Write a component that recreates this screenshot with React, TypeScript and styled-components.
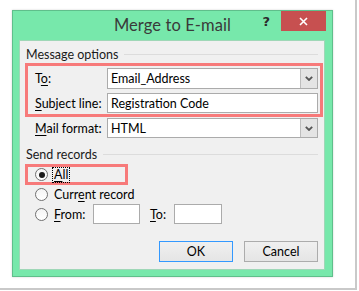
import React from "react";
import styled, { createGlobalStyle } from "styled-components";

const Global = createGlobalStyle`
  html, body { margin: 0; padding: 0; background: #ffffff; }
  body { font-family: Lato, "Noto Sans", sans-serif; }
  * { box-sizing: border-box; }
`;

const Frame = styled.div`
  width: 357px;
  height: 290px;
  border-right: 2px solid #c9c9c9;
  border-bottom: 2px solid #c9c9c9;
  padding: 10px 0 0 12px;
`;

const Dialog = styled.div`
  width: 321px;
  height: 267px;
  background: #77e8ab;
  border: 1px solid #5fbf8b;
  box-shadow: 0 0 2px rgba(0, 0, 0, 0.18);
  padding: 0 6px 0 6px;
  display: flex;
  flex-direction: column;
`;

const TitleBar = styled.div`
  height: 29px;
  display: grid;
  grid-template-columns: 1fr auto 1fr;
  align-items: start;
  margin: 0 -6px;
`;

const Title = styled.div`
  grid-column: 2;
  font-size: 16.5px;
  line-height: 29px;
  color: #3a3a3a;
  letter-spacing: 0.1px;
`;

const Controls = styled.div`
  grid-column: 3;
  justify-self: end;
  display: flex;
  align-items: flex-start;
  gap: 11px;
  margin-right: 6px;
`;

const Help = styled.span`
  font-family: "DejaVu Sans", sans-serif;
  font-weight: bold;
  font-size: 13px;
  line-height: 22px;
  color: #2b2b2b;
`;

const CloseBtn = styled.div`
  width: 45px;
  height: 20px;
  background: #c75050;
  display: flex;
  align-items: center;
  justify-content: center;
`;

const Panel = styled.div`
  width: 306px;
  height: 230px;
  background: #f0f0f0;
  border: 1px solid #9fd7b7;
  padding: 5px 1px 0 5px;
  display: flex;
  flex-direction: column;
  font-size: 12px;
  color: #000;
`;

const GroupHeader = styled.div<{ $top?: number }>`
  display: flex;
  align-items: center;
  height: 16px;
  margin-top: ${(p) => p.$top ?? 0}px;
  padding-left: 1px;
  padding-right: 5px;
  color: #1a1a1a;
  font-size: 12.5px;
`;

const Rule = styled.div`
  flex: 1;
  height: 1px;
  background: #dcdcdc;
  margin-left: 6px;
`;

const Highlight = styled.div<{ $width?: number; $top?: number }>`
  border: 3px solid #f77a7a;
  margin-top: ${(p) => p.$top ?? 0}px;
  width: ${(p) => (p.$width ? `${p.$width}px` : "auto")};
  display: flex;
  flex-direction: column;
`;

const FieldRows = styled.div`
  display: flex;
  flex-direction: column;
  gap: 4px;
  padding: 2px 2px 1px 7px;
`;

const FieldRow = styled.div<{ $pad?: boolean; $top?: number }>`
  display: flex;
  align-items: center;
  margin-top: ${(p) => p.$top ?? 0}px;
  padding: ${(p) => (p.$pad ? "0 5px 0 10px" : "0")};
`;

const Label = styled.div`
  width: 72px;
  flex: none;
  font-size: 12.5px;
`;

const U = styled.span`
  text-decoration: underline;
  text-underline-offset: 2px;
`;

const Box = styled.div<{ $h?: number }>`
  flex: 1;
  height: ${(p) => p.$h ?? 20}px;
  border: 1px solid #ababab;
  background: #fff;
  display: flex;
  align-items: center;
  padding-left: 3px;
  font-size: 12.5px;
`;

const Combo = styled(Box)`
  padding-right: 0;
  align-items: stretch;
`;

const ComboText = styled.div`
  flex: 1;
  display: flex;
  align-items: center;
`;

const DropBtn = styled.div`
  width: 17px;
  background: #e4e4e4;
  border-left: 1px solid #bdbdbd;
  display: flex;
  align-items: center;
  justify-content: center;
`;

const RadioRow = styled.div<{ $h: number; $pad?: number }>`
  display: flex;
  align-items: center;
  height: ${(p) => p.$h}px;
  padding-left: ${(p) => p.$pad ?? 10}px;
  font-size: 12.5px;
`;

const RadioCircle = styled.div<{ $on?: boolean }>`
  width: 13px;
  height: 13px;
  border-radius: 50%;
  border: 1px solid #707070;
  background: linear-gradient(#f4f4f4, #ffffff);
  display: flex;
  align-items: center;
  justify-content: center;
  margin-right: 4px;
  flex: none;
  &::after {
    content: "";
    width: 6px;
    height: 6px;
    border-radius: 50%;
    background: #1a1a1a;
    display: ${(p) => (p.$on ? "block" : "none")};
  }
`;

const RadioLabel = styled.span<{ $focus?: boolean }>`
  padding: 0 1px;
  border: 1px dotted ${(p) => (p.$focus ? "#000" : "transparent")};
  line-height: 14px;
`;

const SmallInput = styled.div<{ $w: number }>`
  width: ${(p) => p.$w}px;
  height: 20px;
  border: 1px solid #ababab;
  background: #fff;
`;

const FromLabel = styled.span`
  width: 41px;
  flex: none;
`;

const ToLabel = styled.span`
  margin-left: 10px;
  width: 24px;
  flex: none;
`;

const Buttons = styled.div`
  display: flex;
  justify-content: flex-end;
  gap: 11px;
  margin-top: 17px;
  padding-right: 5px;
`;

const Button = styled.div<{ $primary?: boolean }>`
  width: 74px;
  height: 21px;
  border: 1px solid ${(p) => (p.$primary ? "#3399ff" : "#acacac")};
  background: linear-gradient(#f0f0f0, #e5e5e5);
  display: flex;
  align-items: center;
  justify-content: center;
  font-size: 12.5px;
`;

export default function App() {
  return (
    <>
      <Global />
      <Frame>
        <Dialog>
          <TitleBar>
            <Title>Merge to E-mail</Title>
            <Controls>
              <Help>?</Help>
              <CloseBtn>
                <svg width="9" height="9" viewBox="0 0 9 9">
                  <path d="M1 1 L8 8 M8 1 L1 8" stroke="#fff" strokeWidth="1.6" />
                </svg>
              </CloseBtn>
            </Controls>
          </TitleBar>
          <Panel>
            <GroupHeader>
              Message options
              <Rule />
            </GroupHeader>
            <Highlight $top={1}>
              <FieldRows>
                <FieldRow>
                  <Label>
                    T<U>o</U>:
                  </Label>
                  <Combo $h={21}>
                    <ComboText>Email_Address</ComboText>
                    <DropBtn>
                      <svg width="8" height="5" viewBox="0 0 8 5">
                        <path d="M0.8 0.8 L4 4 L7.2 0.8" stroke="#555" strokeWidth="1.8" fill="none" />
                      </svg>
                    </DropBtn>
                  </Combo>
                </FieldRow>
                <FieldRow>
                  <Label>
                    <U>S</U>ubject line:
                  </Label>
                  <Box $h={20}>Registration Code</Box>
                </FieldRow>
              </FieldRows>
            </Highlight>
            <FieldRow $pad $top={1}>
              <Label>
                <U>M</U>ail format:
              </Label>
              <Combo $h={20}>
                <ComboText>HTML</ComboText>
                <DropBtn>
                  <svg width="8" height="5" viewBox="0 0 8 5">
                    <path d="M0.8 0.8 L4 4 L7.2 0.8" stroke="#555" strokeWidth="1.8" fill="none" />
                  </svg>
                </DropBtn>
              </Combo>
            </FieldRow>
            <GroupHeader $top={8}>
              Send records
              <Rule />
            </GroupHeader>
            <Highlight $top={2} $width={103}>
              <RadioRow $h={15} $pad={7}>
                <RadioCircle $on />
                <RadioLabel $focus>
                  <U>A</U>ll
                </RadioLabel>
              </RadioRow>
            </Highlight>
            <RadioRow $h={19}>
              <RadioCircle />
              <RadioLabel>
                Curr<U>e</U>nt record
              </RadioLabel>
            </RadioRow>
            <RadioRow $h={20}>
              <RadioCircle />
              <FromLabel>
                <RadioLabel>
                  <U>F</U>rom:
                </RadioLabel>
              </FromLabel>
              <SmallInput $w={47} />
              <ToLabel>
                <U>T</U>o:
              </ToLabel>
              <SmallInput $w={48} />
            </RadioRow>
            <Buttons>
              <Button $primary>OK</Button>
              <Button>Cancel</Button>
            </Buttons>
          </Panel>
        </Dialog>
      </Frame>
    </>
  );
}
